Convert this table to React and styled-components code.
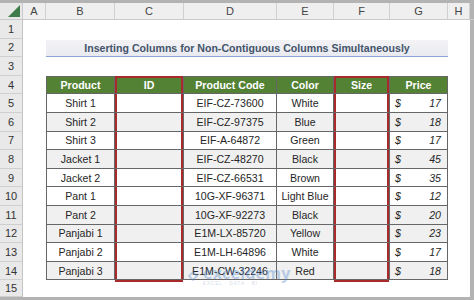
import React from "react";
import styled, { createGlobalStyle } from "styled-components";

const Global = createGlobalStyle`
  html, body { margin: 0; padding: 0; background: #fff; }
  body { font-family: "Liberation Sans", Arial, sans-serif; }
`;

const COLS = "23px 23px 69px 69px 93px 57px 56px 58px 22px 4px";
const ROW_H = 18.6;

const Page = styled.div`
  width: 474px;
  height: 300px;
  overflow: hidden;
  position: relative;
  background: #fff;
  display: flex;
  flex-direction: column;
`;

const TopBand = styled.div`
  height: 3px;
  background: #b3b3b3;
  flex: none;
`;

const BottomBand = styled.div`
  height: 3px;
  background: #b3b3b3;
  flex: none;
`;

const HeaderRow = styled.div`
  display: grid;
  grid-template-columns: ${COLS};
  height: 17px;
  flex: none;
  background: #efefef;
  border-bottom: 1px solid #c9c9c9;
  box-sizing: border-box;
`;

const Corner = styled.div`
  position: relative;
  border-right: 1px solid #c9c9c9;
  background: #e8e8e8;
`;

const CornerTri = styled.svg`
  position: absolute;
  right: 2px;
  bottom: 2px;
`;

const ColLetter = styled.div`
  display: flex;
  align-items: center;
  justify-content: center;
  font-size: 11px;
  color: #444;
  border-right: 1px solid #d0d0d0;
  box-sizing: border-box;
`;

const Scroll = styled.div`
  background: #b3b3b3;
`;

const Row = styled.div`
  display: grid;
  grid-template-columns: ${COLS};
  height: ${(p) => p.$h || ROW_H}px;
  flex: none;
`;

const RowNum = styled.div`
  display: flex;
  align-items: center;
  justify-content: center;
  background: #e9e9e9;
  color: #333;
  font-size: 11px;
  border-right: 1px solid #c4c4c4;
  border-bottom: 1px solid #cfcfcf;
  box-sizing: border-box;
`;

const Blank = styled.div``;

const TitleCell = styled.div`
  grid-column: 3 / 9;
  display: flex;
  align-items: center;
  justify-content: center;
  background: linear-gradient(#f3f3f6, #e9eaf0);
  border-bottom: 1.5px solid #8ea3d6;
  box-sizing: border-box;
  font-weight: bold;
  font-size: 10.6px;
  color: #44546a;
  margin-top: 1px;
`;

const Cell = styled.div`
  display: flex;
  align-items: center;
  justify-content: ${(p) => (p.$split ? "space-between" : "center")};
  padding: ${(p) => (p.$split ? "0 6px 0 5px" : "0")};
  box-sizing: border-box;
  font-size: 10.6px;
  color: ${(p) => (p.$head ? "#fff" : "#262626")};
  font-weight: ${(p) => (p.$head ? "bold" : "normal")};
  font-style: ${(p) => (p.$split ? "italic" : "normal")};
  background: ${(p) => (p.$head ? "#548235" : p.$shade ? "#f0f0f0" : "#fff")};
  border-bottom: 1px solid #666;
  border-right: 1px solid #666;
  border-left: ${(p) => (p.$first ? "1px solid #666" : "none")};
  border-top: ${(p) => (p.$head ? "1px solid #666" : "none")};
  box-shadow: ${(p) =>
    p.$hl ? "inset 2px 0 0 #a82a2a, inset -2px 0 0 #a82a2a" : "none"};
  position: relative;
`;

const HlEdge = styled.div`
  position: absolute;
  left: 0;
  right: 0;
  height: 2px;
  background: #a82a2a;
  ${(p) => (p.$top ? "top: -1px;" : "bottom: -3px;")}
`;

const Watermark = styled.div`
  position: absolute;
  left: 186px;
  top: 265px;
  display: flex;
  align-items: center;
  gap: 3px;
  opacity: 0.35;
  pointer-events: none;
`;

const WmText = styled.div`
  display: flex;
  flex-direction: column;
  line-height: 1;
`;

const WmName = styled.span`
  font-family: "Open Sans", sans-serif;
  font-weight: bold;
  font-size: 16px;
  color: #4f86cc;
  letter-spacing: 0.2px;
`;

const WmSub = styled.span`
  font-size: 4.5px;
  color: #7f9cc4;
  letter-spacing: 1px;
  margin-top: 1px;
`;

const letters = ["A", "B", "C", "D", "E", "F", "G", "H"];

const data = [
  ["Shirt 1", "EIF-CZ-73600", "White", 17, false],
  ["Shirt 2", "EIF-CZ-97375", "Blue", 18, true],
  ["Shirt 3", "EIF-A-64872", "Green", 17, false],
  ["Jacket 1", "EIF-CZ-48270", "Black", 45, true],
  ["Jacket 2", "EIF-CZ-66531", "Brown", 35, false],
  ["Pant 1", "10G-XF-96371", "Light Blue", 12, false],
  ["Pant 2", "10G-XF-92273", "Black", 20, true],
  ["Panjabi 1", "E1M-LX-85720", "Yellow", 23, true],
  ["Panjabi 2", "E1M-LH-64896", "White", 17, false],
  ["Panjabi 3", "E1M-CW-32246", "Red", 18, true],
];

function EmptyRow({ n, h }) {
  return (
    <Row $h={h}>
      <RowNum>{n}</RowNum>
      <Blank /><Blank /><Blank /><Blank /><Blank /><Blank /><Blank /><Blank />
      <Scroll />
    </Row>
  );
}

export default function App() {
  return (
    <>
      <Global />
      <Page>
        <TopBand />
        <HeaderRow>
          <Corner>
            <CornerTri width="12" height="12" viewBox="0 0 12 12">
              <polygon points="12,0 12,12 0,12" fill="#3e7d4a" />
            </CornerTri>
          </Corner>
          {letters.map((l) => (
            <ColLetter key={l}>{l}</ColLetter>
          ))}
          <Scroll />
        </HeaderRow>

        <EmptyRow n={1} />
        <Row>
          <RowNum>2</RowNum>
          <Blank />
          <TitleCell>Inserting Columns for Non-Contiguous Columns Simultaneously</TitleCell>
          <Blank />
          <Scroll />
        </Row>
        <EmptyRow n={3} />
        <Row>
          <RowNum>4</RowNum>
          <Blank />
          <Cell $head $first>Product</Cell>
          <Cell $head $hl>
            <HlEdge $top />
            ID
          </Cell>
          <Cell $head>Product Code</Cell>
          <Cell $head>Color</Cell>
          <Cell $head $hl>
            <HlEdge $top />
            Size
          </Cell>
          <Cell $head>Price</Cell>
          <Blank />
          <Scroll />
        </Row>
        {data.map(([name, code, color, price, shade], i) => {
          const last = i === data.length - 1;
          return (
            <Row key={name}>
              <RowNum>{5 + i}</RowNum>
              <Blank />
              <Cell $first $shade={shade}>{name}</Cell>
              <Cell $shade={shade} $hl>
                {last && <HlEdge />}
              </Cell>
              <Cell $shade={shade}>{code}</Cell>
              <Cell $shade={shade}>{color}</Cell>
              <Cell $shade={shade} $hl>
                {last && <HlEdge />}
              </Cell>
              <Cell $shade={shade} $split>
                <span>$</span>
                <span>{price}</span>
              </Cell>
              <Blank />
              <Scroll />
            </Row>
          );
        })}
        <EmptyRow n={15} h={17} />
        <BottomBand />
        <Watermark>
          <svg width="14" height="14" viewBox="0 0 16 16">
            <path d="M2 8 L8 2 L14 8 L8 14 Z" fill="#4f86cc" />
            <path d="M5 8 L8 5 L11 8 L8 11 Z" fill="#fff" />
          </svg>
          <WmText>
            <WmName>exceldemy</WmName>
            <WmSub>EXCEL · DATA · BI</WmSub>
          </WmText>
        </Watermark>
      </Page>
    </>
  );
}
